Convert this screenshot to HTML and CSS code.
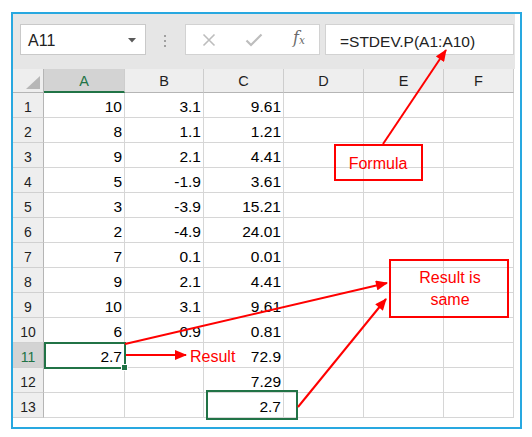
FILE: index.html
```html
<!DOCTYPE html>
<html>
<head>
<meta charset="utf-8">
<link rel="stylesheet" href="styles.css">
</head>
<body>
<div class="frame">
  <div class="toolbar">
    <div class="namebox">
      <span>A11</span>
      <svg class="caret" width="8" height="5" viewBox="0 0 8 5"><path d="M0 0H8L4 4.5Z" fill="#5a5a5a"/></svg>
    </div>
    <div class="grip"><i></i><i></i><i></i></div>
    <div class="btns">
      <svg class="ico" width="14" height="14" viewBox="0 0 14 14"><path d="M1.5 1.5L12.5 12.5M12.5 1.5L1.5 12.5" stroke="#bdbdbd" stroke-width="1.6" fill="none"/></svg>
      <svg class="ico" width="18" height="14" viewBox="0 0 18 14"><path d="M1.5 7.5L6 12L16.5 1.5" stroke="#bdbdbd" stroke-width="2.2" fill="none"/></svg>
      <span class="fx">f<sub>x</sub></span>
    </div>
    <div class="formula">=STDEV.P(A1:A10)</div>
  </div>
  <div class="sheet">
    <div class="corner"><svg width="16" height="14" viewBox="0 0 16 14"><path d="M15 0V13H1Z" fill="#b7b7b7"/></svg></div>
    <div class="ch sel">A</div><div class="ch">B</div><div class="ch">C</div><div class="ch">D</div><div class="ch">E</div><div class="ch">F</div>

    <div class="rh">1</div><div class="c">10</div><div class="c">3.1</div><div class="c">9.61</div><div class="c"></div><div class="c"></div><div class="c"></div>
    <div class="rh">2</div><div class="c">8</div><div class="c">1.1</div><div class="c">1.21</div><div class="c"></div><div class="c"></div><div class="c"></div>
    <div class="rh">3</div><div class="c">9</div><div class="c">2.1</div><div class="c">4.41</div><div class="c"></div><div class="c"></div><div class="c"></div>
    <div class="rh">4</div><div class="c">5</div><div class="c">-1.9</div><div class="c">3.61</div><div class="c"></div><div class="c"></div><div class="c"></div>
    <div class="rh">5</div><div class="c">3</div><div class="c">-3.9</div><div class="c">15.21</div><div class="c"></div><div class="c"></div><div class="c"></div>
    <div class="rh">6</div><div class="c">2</div><div class="c">-4.9</div><div class="c">24.01</div><div class="c"></div><div class="c"></div><div class="c"></div>
    <div class="rh">7</div><div class="c">7</div><div class="c">0.1</div><div class="c">0.01</div><div class="c"></div><div class="c"></div><div class="c"></div>
    <div class="rh">8</div><div class="c">9</div><div class="c">2.1</div><div class="c">4.41</div><div class="c"></div><div class="c"></div><div class="c"></div>
    <div class="rh">9</div><div class="c">10</div><div class="c">3.1</div><div class="c">9.61</div><div class="c"></div><div class="c"></div><div class="c"></div>
    <div class="rh">10</div><div class="c">6</div><div class="c">0.9</div><div class="c">0.81</div><div class="c"></div><div class="c"></div><div class="c"></div>
    <div class="rh sel">11</div><div class="c">2.7</div><div class="c"></div><div class="c">72.9</div><div class="c"></div><div class="c"></div><div class="c"></div>
    <div class="rh">12</div><div class="c"></div><div class="c"></div><div class="c">7.29</div><div class="c"></div><div class="c"></div><div class="c"></div>
    <div class="rh">13</div><div class="c"></div><div class="c"></div><div class="c">2.7</div><div class="c"></div><div class="c"></div><div class="c"></div>
  </div>
</div>

<svg class="overlay" width="532" height="437" viewBox="0 0 532 437">
  <defs>
    <marker id="ah" viewBox="0 0 12 10" refX="11" refY="5" markerWidth="13" markerHeight="10" markerUnits="userSpaceOnUse" orient="auto">
      <path d="M0 0L12 5L0 10Z" fill="#ff0000"/>
    </marker>
  </defs>
  <rect x="45" y="343" width="80" height="25" fill="none" stroke="#217346" stroke-width="2"/>
  <rect x="121.5" y="364.5" width="6" height="6" fill="#217346" stroke="#fff" stroke-width="1"/>
  <rect x="207" y="391" width="90" height="28" fill="none" stroke="#217346" stroke-width="2"/>

  <rect x="335" y="145" width="87" height="35" fill="none" stroke="#ff0000" stroke-width="2"/>
  <text class="note" x="378" y="169" text-anchor="middle">Formula</text>
  <line x1="383" y1="144" x2="446" y2="50" stroke="#ff0000" stroke-width="2" marker-end="url(#ah)"/>

  <rect x="390" y="260" width="118" height="57" fill="none" stroke="#ff0000" stroke-width="2"/>
  <text class="note" x="450" y="283" text-anchor="middle">Result is</text>
  <text class="note" x="450" y="305" text-anchor="middle">same</text>
  <line x1="125" y1="344" x2="387" y2="283" stroke="#ff0000" stroke-width="2" marker-end="url(#ah)"/>
  <line x1="298" y1="407" x2="386" y2="299" stroke="#ff0000" stroke-width="2" marker-end="url(#ah)"/>

  <line x1="126" y1="355" x2="186" y2="355" stroke="#ff0000" stroke-width="2" marker-end="url(#ah)"/>
  <text class="note" x="190" y="362">Result</text>
</svg>
</body>
</html>
```

FILE: styles.css
```css
* { box-sizing: border-box; }
html, body { margin: 0; padding: 0; background: #ffffff; }
body {
  width: 532px;
  height: 437px;
  position: relative;
  overflow: hidden;
  font-family: "Liberation Sans", Arial, sans-serif;
  color: #1a1a1a;
}
.frame {
  margin: 12px 0 0 11px;
  width: 511px;
  height: 417px;
  border: 2px solid #28a8e0;
  background: #ffffff;
}
.toolbar {
  width: 502px;
  height: 55px;
  background: #e6e6e6;
  display: flex;
  align-items: flex-start;
  padding: 10px 0 0 7px;
}
.namebox {
  width: 126px;
  height: 31px;
  background: #ffffff;
  border: 1px solid #c9c9c9;
  display: flex;
  align-items: flex-start;
  justify-content: space-between;
  padding: 3px 9px 0 7px;
  font-size: 16px;
  line-height: 26px;
  color: #222;
}
.caret { margin-top: 10px; }
.grip {
  margin-left: 18px;
  margin-top: 11px;
  width: 2px;
  display: flex;
  flex-direction: column;
  gap: 3px;
}
.grip i {
  display: block;
  width: 2px;
  height: 2px;
  background: #a0a0a0;
}
.btns {
  margin-left: 19px;
  width: 135px;
  height: 31px;
  background: #ffffff;
  border: 1px solid #d2d2d2;
  display: flex;
  align-items: center;
  padding: 0 0 0 16px;
}
.btns .ico:first-child { margin-right: 29px; }
.btns .ico:nth-child(2) { margin-right: 30px; }
.fx {
  font-family: "DejaVu Serif", "Liberation Serif", serif;
  font-style: italic;
  font-weight: normal;
  font-size: 16px;
  color: #6a6a6a;
  line-height: 20px;
  margin-top: -2px;
}
.fx sub {
  font-size: 10.5px;
  vertical-align: -1px;
}
.formula {
  margin-left: 5px;
  width: 189px;
  height: 31px;
  background: #ffffff;
  border: 1px solid #d2d2d2;
  padding: 4px 0 0 14px;
  font-size: 15.5px;
  line-height: 25px;
  color: #222;
  white-space: nowrap;
}
.sheet {
  display: grid;
  grid-template-columns: 31px 81px 79px 80px 80px 80px 70px;
  grid-template-rows: 24px;
  grid-auto-rows: 25px;
  width: 501px;
}
.corner {
  background: #eeeeee;
  border-right: 1px solid #b5b5b5;
  border-bottom: 1px solid #b5b5b5;
  display: flex;
  justify-content: flex-end;
  align-items: flex-end;
  padding: 0 2px 2px 0;
}
.ch {
  background: #eeeeee;
  border-right: 1px solid #cdcdcd;
  border-bottom: 1px solid #b5b5b5;
  text-align: center;
  font-size: 14.5px;
  line-height: 24px;
  color: #1f1f1f;
}
.ch.sel {
  background: #d3d3d3;
  color: #217346;
  border-bottom: 2px solid #217346;
}
.rh {
  background: #eeeeee;
  border-right: 1px solid #b5b5b5;
  border-bottom: 1px solid #d0d0d0;
  text-align: center;
  font-size: 14px;
  line-height: 22px;
  padding-top: 3px;
  color: #1f1f1f;
}
.rh.sel {
  background: #d3d3d3;
  color: #217346;
}
.c {
  border-right: 1px solid #d6d6d6;
  border-bottom: 1px solid #d6d6d6;
  text-align: right;
  padding: 3px 2px 0 0;
  font-size: 15.5px;
  line-height: 22px;
  color: #000;
}
.overlay {
  position: absolute;
  left: 0;
  top: 0;
  pointer-events: none;
}
.note {
  font-family: "Liberation Sans", Arial, sans-serif;
  font-size: 16px;
  fill: #ff0000;
}
```
